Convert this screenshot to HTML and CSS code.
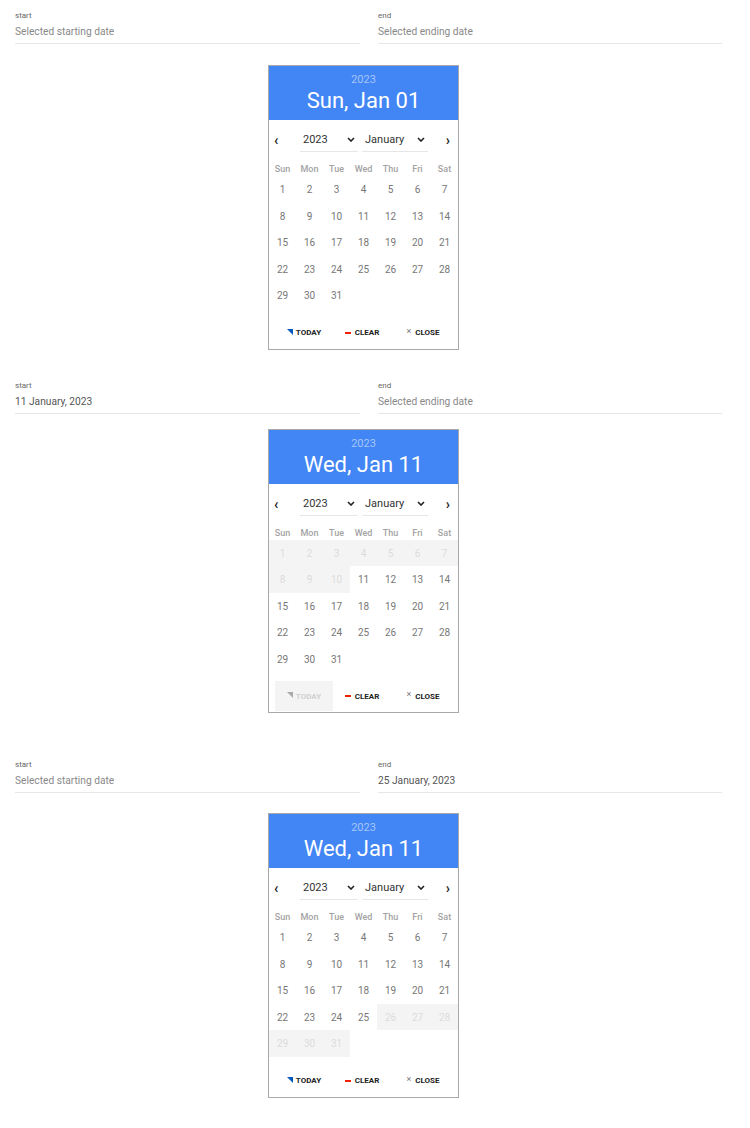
FILE: index.html
```html
<!DOCTYPE html>
<html>
<head>
<meta charset="utf-8">
<link rel="stylesheet" href="styles.css">
</head>
<body>

<section class="block block-1">
  <div class="fields">
    <div class="field"><label class="lbl">start</label><div class="inp placeholder">Selected starting date</div></div>
    <div class="field"><label class="lbl">end</label><div class="inp placeholder">Selected ending date</div></div>
  </div>
  <div class="picker cal-1">
    <div class="head"><div class="year">2023</div><div class="date">Sun, Jan 01</div></div>
    <div class="nav">
      <span class="prev">‹</span>
      <div class="sel sel-year">2023<svg class="chev" viewBox="0 0 8 5" width="8" height="5"><polyline points="1,1 4,4 7,1"/></svg></div>
      <div class="sel sel-month">January<svg class="chev" viewBox="0 0 8 5" width="8" height="5"><polyline points="1,1 4,4 7,1"/></svg></div>
      <span class="next">›</span>
    </div>
    <div class="week"><span>Sun</span><span>Mon</span><span>Tue</span><span>Wed</span><span>Thu</span><span>Fri</span><span>Sat</span></div>
    <div class="days">
      <span>1</span><span>2</span><span>3</span><span>4</span><span>5</span><span>6</span><span>7</span>
      <span>8</span><span>9</span><span>10</span><span>11</span><span>12</span><span>13</span><span>14</span>
      <span>15</span><span>16</span><span>17</span><span>18</span><span>19</span><span>20</span><span>21</span>
      <span>22</span><span>23</span><span>24</span><span>25</span><span>26</span><span>27</span><span>28</span>
      <span>29</span><span>30</span><span>31</span>
    </div>
    <div class="foot">
      <button class="btn today">TODAY</button>
      <button class="btn clear">CLEAR</button>
      <button class="btn close"><span class="x">×</span>CLOSE</button>
    </div>
  </div>
</section>

<section class="block block-2">
  <div class="fields">
    <div class="field"><label class="lbl">start</label><div class="inp">11 January, 2023</div></div>
    <div class="field"><label class="lbl">end</label><div class="inp placeholder">Selected ending date</div></div>
  </div>
  <div class="picker cal-2">
    <div class="head"><div class="year">2023</div><div class="date">Wed, Jan 11</div></div>
    <div class="nav">
      <span class="prev">‹</span>
      <div class="sel sel-year">2023<svg class="chev" viewBox="0 0 8 5" width="8" height="5"><polyline points="1,1 4,4 7,1"/></svg></div>
      <div class="sel sel-month">January<svg class="chev" viewBox="0 0 8 5" width="8" height="5"><polyline points="1,1 4,4 7,1"/></svg></div>
      <span class="next">›</span>
    </div>
    <div class="week"><span>Sun</span><span>Mon</span><span>Tue</span><span>Wed</span><span>Thu</span><span>Fri</span><span>Sat</span></div>
    <div class="days">
      <span class="off">1</span><span class="off">2</span><span class="off">3</span><span class="off">4</span><span class="off">5</span><span class="off">6</span><span class="off">7</span>
      <span class="off">8</span><span class="off">9</span><span class="off">10</span><span>11</span><span>12</span><span>13</span><span>14</span>
      <span>15</span><span>16</span><span>17</span><span>18</span><span>19</span><span>20</span><span>21</span>
      <span>22</span><span>23</span><span>24</span><span>25</span><span>26</span><span>27</span><span>28</span>
      <span>29</span><span>30</span><span>31</span>
    </div>
    <div class="foot">
      <button class="btn today disabled">TODAY</button>
      <button class="btn clear">CLEAR</button>
      <button class="btn close"><span class="x">×</span>CLOSE</button>
    </div>
  </div>
</section>

<section class="block block-3">
  <div class="fields">
    <div class="field"><label class="lbl">start</label><div class="inp placeholder">Selected starting date</div></div>
    <div class="field"><label class="lbl">end</label><div class="inp">25 January, 2023</div></div>
  </div>
  <div class="picker cal-3">
    <div class="head"><div class="year">2023</div><div class="date">Wed, Jan 11</div></div>
    <div class="nav">
      <span class="prev">‹</span>
      <div class="sel sel-year">2023<svg class="chev" viewBox="0 0 8 5" width="8" height="5"><polyline points="1,1 4,4 7,1"/></svg></div>
      <div class="sel sel-month">January<svg class="chev" viewBox="0 0 8 5" width="8" height="5"><polyline points="1,1 4,4 7,1"/></svg></div>
      <span class="next">›</span>
    </div>
    <div class="week"><span>Sun</span><span>Mon</span><span>Tue</span><span>Wed</span><span>Thu</span><span>Fri</span><span>Sat</span></div>
    <div class="days">
      <span>1</span><span>2</span><span>3</span><span>4</span><span>5</span><span>6</span><span>7</span>
      <span>8</span><span>9</span><span>10</span><span>11</span><span>12</span><span>13</span><span>14</span>
      <span>15</span><span>16</span><span>17</span><span>18</span><span>19</span><span>20</span><span>21</span>
      <span>22</span><span>23</span><span>24</span><span>25</span><span class="off">26</span><span class="off">27</span><span class="off">28</span>
      <span class="off">29</span><span class="off">30</span><span class="off">31</span>
    </div>
    <div class="foot">
      <button class="btn today">TODAY</button>
      <button class="btn clear">CLEAR</button>
      <button class="btn close"><span class="x">×</span>CLOSE</button>
    </div>
  </div>
</section>

</body>
</html>
```

FILE: styles.css
```css
* { box-sizing: border-box; }

body {
  margin: 0;
  background: #fff;
  font-family: Roboto, "Liberation Sans", Arial, sans-serif;
  color: #333;
}

.block-1 { padding-top: 10px; }
.block-2 { padding-top: 30px; }
.block-3 { padding-top: 46px; }

.fields {
  display: grid;
  grid-template-columns: 345px 344px;
  column-gap: 18px;
  padding-left: 15px;
}

.field {
  display: flex;
  flex-direction: column;
  border-bottom: 1px solid #e4e6ea;
}

.lbl {
  font-size: 8px;
  line-height: 12px;
  height: 12px;
  color: #666;
}

.inp {
  font-size: 10.2px;
  line-height: 19px;
  height: 21px;
  padding-bottom: 2px;
  color: #555;
}

.inp.placeholder { color: #888; }

.picker {
  width: 191px;
  margin-left: 268px;
  border: 1px solid #a9a9a9;
  background: #fff;
}

.block-1 .picker { margin-top: 21px; }
.block-2 .picker { margin-top: 15px; }
.block-3 .picker { margin-top: 20px; }

.head {
  height: 54px;
  background: #4285f4;
  text-align: center;
  padding-top: 7px;
}

.year {
  font-size: 11px;
  line-height: 14px;
  color: #a5c5fb;
}

.date {
  font-size: 22px;
  line-height: 28px;
  color: #fff;
}

.nav {
  height: 42px;
  display: flex;
  align-items: flex-start;
  padding-top: 8px;
}

.prev, .next {
  font-size: 14px;
  font-weight: bold;
  line-height: 24px;
  color: #222;
}

.prev { width: 31px; padding-left: 5px; }
.next { flex: 1; text-align: right; padding-right: 8px; }

.sel {
  height: 24px;
  line-height: 23px;
  font-size: 11px;
  color: #333;
  border-bottom: 1px solid #e6e6e6;
  display: flex;
  justify-content: space-between;
  align-items: center;
  padding: 0 3px;
}

.sel-year { width: 58px; margin-right: 4px; }
.sel-month { width: 66px; }

.chev {
  fill: none;
  stroke: #222;
  stroke-width: 1.6;
}

.week, .days {
  display: grid;
  grid-template-columns: repeat(7, 27px);
}

.week span {
  height: 14px;
  line-height: 14px;
  font-size: 9px;
  font-weight: 500;
  color: #a3a3a3;
  text-align: center;
}

.days span {
  height: 26.5px;
  line-height: 28px;
  font-size: 10px;
  color: #777;
  text-align: center;
}

.days span.off {
  background: #f4f4f4;
  color: #dcdcdc;
}

.foot {
  display: grid;
  grid-template-columns: 58px 58px 64px;
  padding: 9px 0 1px 6px;
}

.btn {
  height: 30px;
  border: 0;
  background: transparent;
  font-family: inherit;
  font-size: 8px;
  font-weight: bold;
  color: #222;
  padding: 0;
  display: flex;
  align-items: center;
  justify-content: center;
}

.today::before {
  content: "";
  width: 0;
  height: 0;
  border-top: 6px solid #0059bc;
  border-left: 6px solid transparent;
  margin-right: 3px;
  position: relative;
  top: -1px;
}

.today.disabled {
  background: #f4f4f4;
  color: #d0d0d0;
}

.today.disabled::before { border-top-color: #aaa; }

.clear::before {
  content: "";
  width: 6px;
  height: 2px;
  background: #e20;
  margin-right: 4px;
}

.close .x {
  font-size: 9px;
  font-weight: normal;
  color: #777;
  margin-right: 4px;
  position: relative;
  top: -2px;
}
```
